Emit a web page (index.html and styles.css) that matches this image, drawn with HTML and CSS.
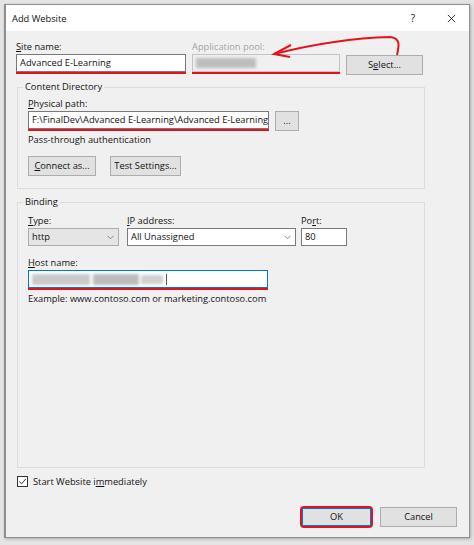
FILE: index.html
```html
<!DOCTYPE html>
<html lang="en">
<head>
  <meta charset="UTF-8">
  <title>Add Website</title>
  <link rel="stylesheet" href="styles.css">
</head>
<body>
  <div class="dialog">
    <div class="titlebar">
      <span class="title">Add Website</span>
      <span class="help">?</span>
      <svg class="close" viewBox="0 0 10 10"><path d="M1 1L9 9M9 1L1 9" stroke="#222" stroke-width="1"/></svg>
    </div>

    <div class="content">
      <!-- site / pool row -->
      <div class="top-row">
        <div class="col site">
          <label><u>S</u>ite name:</label>
          <div class="marked"><div class="input">Advanced E-Learning</div></div>
        </div>
        <div class="col pool">
          <label class="disabled">Application pool:</label>
          <div class="marked"><div class="input readonly"><span class="blur b1"></span></div></div>
        </div>
        <button class="btn select-btn">S<u>e</u>lect...</button>
      </div>

      <fieldset class="group content-dir">
        <legend>Content Directory</legend>
        <label><u>P</u>hysical path:</label>
        <div class="row">
          <div class="marked path-wrap"><div class="input">F:\FinalDev\Advanced E-Learning\Advanced E-Learning\</div></div>
          <button class="btn browse">...</button>
        </div>
        <div class="text pass">Pass-through authentication</div>
        <div class="row buttons-left">
          <button class="btn connect"><u>C</u>onnect as...</button>
          <button class="btn test">Test Settings...</button>
        </div>
      </fieldset>

      <fieldset class="group binding">
        <legend>Binding</legend>
        <div class="row bind-row">
          <div class="col type">
            <label><u>T</u>ype:</label>
            <div class="combo gray">http
              <svg class="chev" viewBox="0 0 8 5"><path d="M0.5 0.5L4 4L7.5 0.5" fill="none" stroke="#777" stroke-width="1"/></svg>
            </div>
          </div>
          <div class="col ip">
            <label><u>I</u>P address:</label>
            <div class="combo">All Unassigned
              <svg class="chev" viewBox="0 0 8 5"><path d="M0.5 0.5L4 4L7.5 0.5" fill="none" stroke="#777" stroke-width="1"/></svg>
            </div>
          </div>
          <div class="col port">
            <label>Po<u>r</u>t:</label>
            <div class="input">80</div>
          </div>
        </div>
        <label class="host-label"><u>H</u>ost name:</label>
        <div class="marked host-wrap">
          <div class="input focused">
            <span class="blur b2"></span><span class="blur b3"></span><span class="blur b4"></span><span class="tick"></span>
          </div>
        </div>
        <div class="text example">Example: www.contoso.com or marketing.contoso.com</div>
      </fieldset>

      <div class="check-row">
        <span class="checkbox">
          <svg viewBox="0 0 10 10"><path d="M1.5 5.2L4 7.6L8.6 2.2" fill="none" stroke="#333" stroke-width="1.1"/></svg>
        </span>
        <span>Start Website i<u>m</u>mediately</span>
      </div>

      <div class="footer">
        <span class="ok-mark"><button class="btn ok">OK</button></span>
        <button class="btn cancel">Cancel</button>
      </div>
    </div>

    <!-- red annotation arrow -->
    <svg class="arrow" viewBox="0 0 474 545">
      <path d="M397 55 C399 46 401 38 390 37 C350 38 310 45 274 54" fill="none" stroke="#e3131b" stroke-width="2"/>
      <path d="M291 45 L274 54 L290 57" fill="none" stroke="#e3131b" stroke-width="2"/>
    </svg>
  </div>
</body>
</html>
```

FILE: styles.css
```css
body {
  margin: 0;
  width: 474px;
  height: 545px;
  overflow: hidden;
  background: #e4e4e4;
  font-family: "Open Sans", "Segoe UI", sans-serif;
  font-size: 9.3px;
  color: #111;
}
u {
  text-underline-offset: 1px;
}
.dialog {
  margin: 4px 0 0 4px;
  width: 463px;
  height: 532px;
  border: 1px solid #8f8f8f;
  border-left-width: 2px;
  background: #f0f0f0;
  box-shadow: 1px 1px 3px rgba(0, 0, 0, 0.25);
}
.titlebar {
  height: 26px;
  background: #fff;
  display: flex;
  align-items: center;
  padding: 0 0 0 6px;
}
.title {
  flex: 1;
  font-size: 9.3px;
}
.help {
  font-size: 10px;
  margin-right: 32px;
}
.close {
  width: 9px;
  height: 9px;
  margin-right: 13px;
}
.content {
  padding: 8px 10px 0 10px;
}
label {
  display: block;
  line-height: 15px;
  height: 15px;
}
label.disabled {
  color: #a4a4a4;
}
.input {
  box-sizing: border-box;
  height: 18px;
  background: #fff;
  border: 1px solid #7a7a7a;
  line-height: 16px;
  padding: 0 3px;
  white-space: nowrap;
  overflow: hidden;
  position: relative;
}
.input.readonly {
  background: #f0f0f0;
  border-color: #c4c4c4;
}
.input.focused {
  border-color: #0078d7;
}
.marked {
  border-bottom: 2px solid #e3131b;
}
.btn {
  box-sizing: border-box;
  height: 20px;
  background: #e1e1e1;
  border: 1px solid #adadad;
  font: inherit;
  color: #111;
  padding: 0;
  line-height: 18px;
}
.top-row {
  display: flex;
  align-items: flex-start;
}
.site {
  width: 170px;
  margin-right: 6px;
}
.pool {
  width: 148px;
  margin-right: 6px;
}
.select-btn {
  width: 77px;
  margin-top: 16px;
}
.blur {
  position: absolute;
  background: #bdbdbd;
  filter: blur(1.5px);
}
.b1 { left: 3px; top: 3px; width: 60px; height: 10px; }
.b2 { left: 3px; top: 3px; width: 58px; height: 11px; background: #c9c9c9; }
.b3 { left: 64px; top: 3px; width: 46px; height: 11px; background: #bcbcbc; }
.b4 { left: 112px; top: 4px; width: 22px; height: 9px; background: #cfcfcf; }
.tick {
  position: absolute;
  left: 137px;
  top: 3px;
  width: 1px;
  height: 11px;
  background: #555;
}
.group {
  margin: 5px 0 0 1px;
  width: 408px;
  box-sizing: border-box;
  border: 1px solid #dcdcdc;
  padding: 2px 10px 12px 10px;
}
.group legend {
  padding: 0 2px;
  margin-left: -5px;
  line-height: 14px;
}
.row {
  display: flex;
  align-items: flex-start;
}
.path-wrap {
  width: 241px;
}
.browse {
  width: 24px;
  margin-left: 6px;
}
.text {
  line-height: 14px;
}
.pass {
  margin-top: 2px;
}
.buttons-left {
  margin-top: 9px;
}
.connect {
  width: 68px;
  margin-right: 14px;
}
.test {
  width: 71px;
}
.binding {
  margin-top: 6px;
  height: 273px;
  padding-top: 4px;
}
.type {
  width: 91px;
  margin-right: 8px;
}
.ip {
  width: 169px;
  margin-right: 5px;
}
.port {
  width: 46px;
}
.combo {
  box-sizing: border-box;
  height: 18px;
  border: 1px solid #7a7a7a;
  background: #fff;
  line-height: 16px;
  padding: 0 3px;
  position: relative;
}
.combo.gray {
  background: #e5e5e5;
  border-color: #acacac;
}
.chev {
  position: absolute;
  right: 4px;
  top: 6px;
  width: 7px;
  height: 5px;
}
.host-label {
  margin-top: 9px;
}
.host-wrap {
  width: 240px;
}
.example {
  margin-top: 2px;
}
.check-row {
  display: flex;
  align-items: center;
  margin-top: 6px;
  margin-left: 1px;
  height: 14px;
}
.checkbox {
  box-sizing: border-box;
  width: 11px;
  height: 11px;
  border: 1px solid #333;
  background: #fff;
  margin-right: 5px;
  display: flex;
}
.checkbox svg {
  width: 9px;
  height: 9px;
}
.footer {
  display: flex;
  justify-content: flex-end;
  align-items: center;
  margin-top: 18px;
  padding-right: 2px;
}
.ok-mark {
  border: 2px solid #e3131b;
  border-radius: 4px;
  margin-right: 7px;
  display: flex;
}
.ok {
  width: 69px;
  height: 18px;
  border: 1px solid #0078d7;
  line-height: 16px;
}
.cancel {
  width: 77px;
}
.arrow {
  position: absolute;
  left: 0;
  top: 0;
  width: 474px;
  height: 545px;
  pointer-events: none;
}
```
